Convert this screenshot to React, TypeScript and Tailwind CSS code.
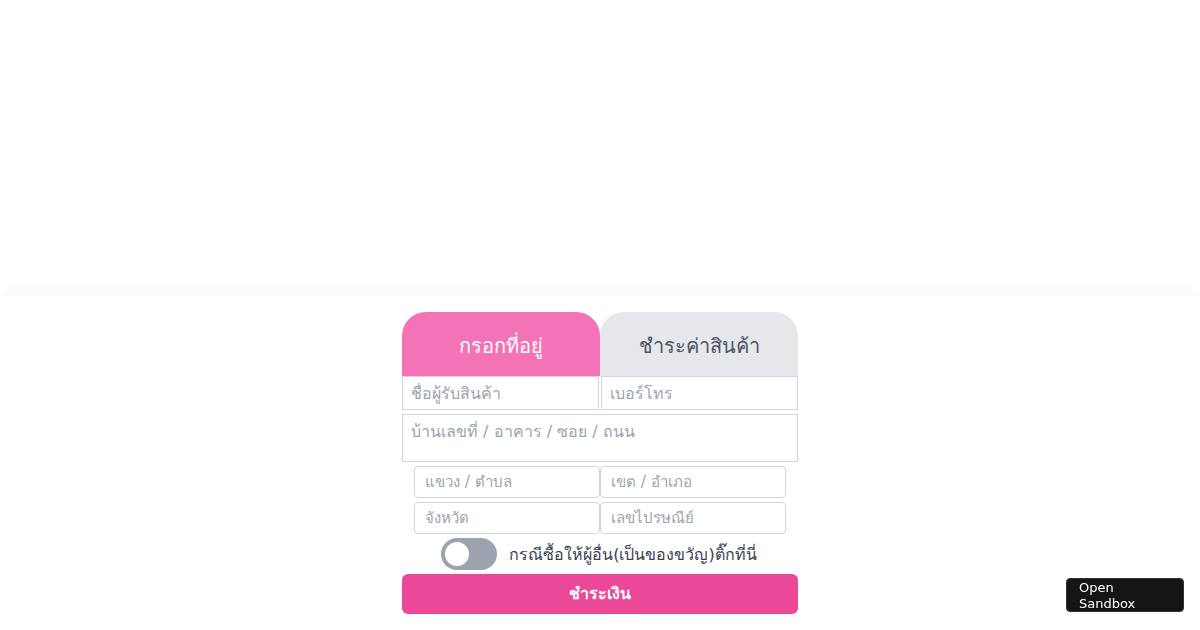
import React from 'react';

const font = { fontFamily: '"DejaVu Sans", "Noto Sans", sans-serif' };

export default function App() {
  return (
    <div className="h-[630px] w-full flex flex-col bg-white font-['DejaVu_Sans',sans-serif]">
      <div className="flex-1" />
      <div className="bg-white shadow-[0_-6px_12px_rgba(0,0,0,0.025)] pt-4 pb-4 flex justify-center">
        <div className="w-[396px] flex flex-col">
          <div className="grid grid-cols-2">
            <button className="h-16 pt-1 rounded-t-3xl bg-[#f472b6] text-white text-xl">กรอกที่อยู่</button>
            <button className="h-16 pt-1 rounded-t-3xl bg-[#e5e7eb] text-[#4b5563] text-xl">ชำระค่าสินค้า</button>
          </div>
          <div className="grid grid-cols-2 gap-[2px]">
            <input
              className="h-[34px] border border-[#d1d5db] px-2 text-base placeholder:text-[#9ca3af] outline-none"
              placeholder="ชื่อผู้รับสินค้า"
            />
            <input
              className="h-[34px] border border-[#d1d5db] px-2 text-base placeholder:text-[#9ca3af] outline-none"
              placeholder="เบอร์โทร"
            />
          </div>
          <textarea
            className="mt-1 h-12 border border-[#d1d5db] px-2 py-[5px] text-base placeholder:text-[#9ca3af] outline-none resize-none"
            placeholder="บ้านเลขที่ / อาคาร / ซอย / ถนน"
          />
          <div className="mt-1 mx-3 grid grid-cols-2 gap-y-1">
            <input
              className="h-8 border border-[#d1d5db] rounded px-2.5 text-[15px] placeholder:text-[#9ca3af] outline-none"
              placeholder="แขวง / ตำบล"
            />
            <input
              className="h-8 border border-[#d1d5db] rounded px-2.5 text-[15px] placeholder:text-[#9ca3af] outline-none"
              placeholder="เขต / อำเภอ"
            />
            <input
              className="h-8 border border-[#d1d5db] rounded px-2.5 text-[15px] placeholder:text-[#9ca3af] outline-none"
              placeholder="จังหวัด"
            />
            <input
              className="h-8 border border-[#d1d5db] rounded px-2.5 text-[15px] placeholder:text-[#9ca3af] outline-none"
              placeholder="เลขไปรษณีย์"
            />
          </div>
          <div className="mt-1 flex items-center justify-center gap-3 pr-[2px]">
            <div className="w-14 h-8 rounded-full bg-[#9ca3af] flex items-center px-1">
              <div className="w-6 h-6 rounded-full bg-white" />
            </div>
            <span className="text-base text-[#374151] pt-[2px]">กรณีซื้อให้ผู้อื่น(เป็นของขวัญ)ติ๊กที่นี่</span>
          </div>
          <button className="mt-1 h-10 rounded-md bg-[#ec4899] text-white font-bold text-base">ชำระเงิน</button>
        </div>
      </div>
      <div
        className="fixed right-4 bottom-[18px] w-[118px] h-[34px] rounded bg-[#151515] border border-[#333] text-white text-[13px] leading-4 px-3 pt-px text-left"
        style={font}
      >
        Open Sandbox
      </div>
    </div>
  );
}
